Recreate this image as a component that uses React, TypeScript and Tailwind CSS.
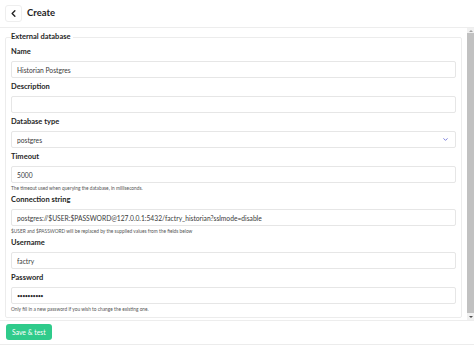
import { ChevronDown, ChevronLeft } from "lucide-react"

type FieldProps = {
  label: string
  value?: string
  type?: string
  help?: string
  select?: boolean
}

function Field({ label, value = "", type = "text", help, select }: FieldProps) {
  return (
    <div className="flex flex-col">
      <label className="mb-[4px] text-[7.5px] leading-[10px] font-bold text-[#262626]">
        {label}
      </label>

      <div className="relative">
        <input
          type={type}
          readOnly
          defaultValue={value}
          className={
            type === "password"
              ? "block h-[17px] w-full rounded-[2px] border border-[#e6e6e6] bg-white px-[5px] text-[5.5px] tracking-[-0.6px] text-[#2a2a2a] outline-none"
              : "block h-[17px] w-full rounded-[2px] border border-[#e6e6e6] bg-white px-[5px] text-[6.7px] text-[#3a3a3a] outline-none"
          }
        />

        {select && (
          <ChevronDown
            size={7}
            strokeWidth={3}
            className="absolute top-[5px] right-[7px] text-[#6b6fd6]"
          />
        )}
      </div>

      {help && (
        <p className="pt-[2px] text-[4.8px] leading-[6px] text-[#555]">
          {help}
        </p>
      )}
    </div>
  )
}

function Scrollbar() {
  return (
    <div className="flex w-[7px] shrink-0 flex-col items-center bg-[#f1f1f1]">
      <div className="mt-[2px] h-0 w-0 border-x-[2px] border-b-[2px] border-x-transparent border-b-[#a3a3a3]" />
      <div className="mt-[1px] w-full flex-1 bg-[#c1c1c1]" />
      <div className="mb-[2px] mt-[3px] h-0 w-0 border-x-[2px] border-t-[2px] border-x-transparent border-t-[#505050]" />
    </div>
  )
}

export default function App() {
  return (
    <div
      className="flex h-[345px] w-[474px] flex-col bg-white"
      style={{ fontFamily: "Lato, 'Noto Sans', sans-serif" }}
    >
      <header className="flex h-[28px] shrink-0 items-center gap-[5px] border-b border-[#ededed] px-[5px]">
        <button
          type="button"
          className="flex h-[17px] w-[17px] items-center justify-center rounded-[3px] border border-[#eeeeee] bg-white text-[#222]"
        >
          <ChevronLeft size={11} strokeWidth={3} />
        </button>

        <h1 className="text-[9.5px] font-bold text-[#222]">
          Create
        </h1>
      </header>

      <div className="flex min-h-0 flex-1 border-b border-[#ededed]">
        <main className="min-w-0 flex-1 overflow-hidden">
          <fieldset className="mx-[5px] mt-[4px] mb-[16px] rounded-[2px] border border-[#ececec] px-[5px] pb-[5px]">
            <legend className="pr-[3px] text-[7.5px] leading-[10px] font-bold text-[#262626]">
              External database
            </legend>

            <div className="mt-[5px] flex flex-col gap-[4px]">
              <Field label="Name" value="Historian Postgres" />

              <Field label="Description" />

              <Field label="Database type" value="postgres" select />

              <Field
                label="Timeout"
                value="5000"
                help="The timeout used when querying the database, in milliseconds."
              />

              <Field
                label="Connection string"
                value="postgres://$USER:$PASSWORD@127.0.0.1:5432/factry_historian?sslmode=disable"
                help="$USER and $PASSWORD will be replaced by the supplied values from the fields below"
              />

              <Field label="Username" value="factry" />

              <Field
                label="Password"
                type="password"
                value="abcdefghij"
                help="Only fill in a new password if you wish to change the existing one."
              />
            </div>
          </fieldset>
        </main>

        <Scrollbar />
      </div>

      <footer className="flex h-[24px] shrink-0 items-start border-b border-[#ececec] px-[6px] pt-[3px]">
        <button
          type="button"
          className="h-[16px] rounded-[3px] bg-[#2fcb8b] px-[6px] text-[6.8px] text-white"
        >
          Save &amp; test
        </button>
      </footer>
    </div>
  )
}
